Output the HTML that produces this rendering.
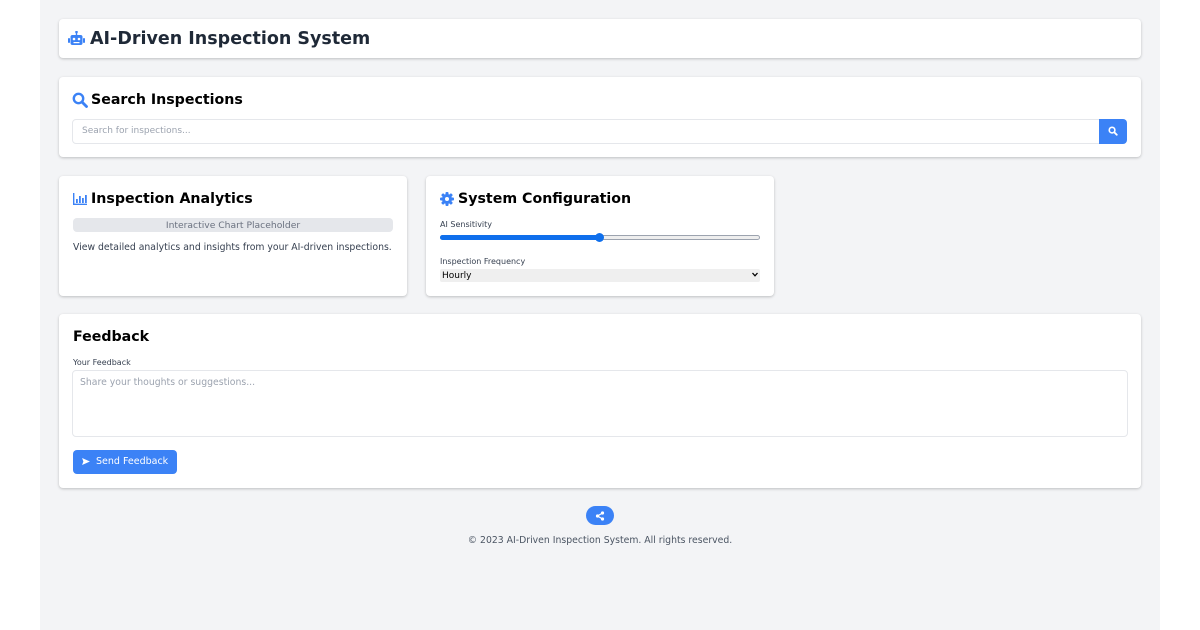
<!DOCTYPE html>
<html><head><meta charset="utf-8"><style>
*{box-sizing:border-box;margin:0;padding:0}
body{width:1200px;height:630px;background:#fff;font-family:"DejaVu Sans","Liberation Sans",sans-serif;position:relative;overflow:hidden}
.wrap{position:absolute;left:40px;top:0;width:1120px;height:630px;background:#f3f4f6}
.card{position:absolute;background:#fff;border-radius:4px;box-shadow:0 1px 3px rgba(0,0,0,.15),0 1px 2px rgba(0,0,0,.08)}
h1{position:absolute;font-size:17.5px;font-weight:bold;color:#1f2937;white-space:nowrap}
h2{position:absolute;font-size:14.2px;font-weight:bold;color:#000;white-space:nowrap}
.ic{position:absolute}
.small{position:absolute;font-size:8px;color:#374151;white-space:nowrap}
</style></head><body>
<div class="wrap"></div>
<div class="card" style="left:59px;top:19px;width:1082px;height:39px"></div>
<svg class="ic" style="left:68px;top:31px" width="17" height="15" viewBox="0 0 17 15"><rect x="2.5" y="4" width="12" height="10" rx="2" fill="#3b82f6"/><rect x="0" y="7" width="2" height="5" rx="1" fill="#3b82f6"/><rect x="15" y="7" width="2" height="5" rx="1" fill="#3b82f6"/><rect x="7.8" y="0" width="1.4" height="4" fill="#3b82f6"/><circle cx="8.5" cy="1" r="1.3" fill="#3b82f6"/><circle cx="6" cy="8" r="1.3" fill="#fff"/><circle cx="11" cy="8" r="1.3" fill="#fff"/><rect x="5.5" y="11" width="6" height="1.2" fill="#fff"/></svg>
<h1 style="left:90px;top:29px">AI-Driven Inspection System</h1>

<div class="card" style="left:59px;top:77px;width:1082px;height:80px"></div>
<svg class="ic" style="left:72px;top:92px" width="16" height="16" viewBox="0 0 16 16"><circle cx="6.5" cy="6.5" r="4.7" fill="none" stroke="#3b82f6" stroke-width="2.4"/><path d="M10 10 L14.5 14.5" stroke="#3b82f6" stroke-width="2.8" stroke-linecap="round"/></svg>
<h2 style="left:91px;top:92px">Search Inspections</h2>
<div style="position:absolute;left:72px;top:119px;width:1030px;height:25px;border:1px solid #e5e7eb;border-radius:4px 0 0 4px;background:#fff"></div>
<div class="small" style="left:82px;top:126px;font-size:9px;color:#9ca3af">Search for inspections...</div>
<div style="position:absolute;left:1099px;top:119px;width:28px;height:25px;background:#3b82f6;border-radius:0 4px 4px 0"></div>
<svg class="ic" style="left:1108px;top:126px" width="10" height="10" viewBox="0 0 16 16"><circle cx="6.5" cy="6.5" r="4.5" fill="none" stroke="#fff" stroke-width="2.6"/><path d="M10 10 L14 14" stroke="#fff" stroke-width="3" stroke-linecap="round"/></svg>

<div class="card" style="left:59px;top:176px;width:348px;height:120px"></div>
<svg class="ic" style="left:73px;top:193px" width="14" height="12" viewBox="0 0 14 12"><path d="M0.7 0V11.3H14" fill="none" stroke="#3b82f6" stroke-width="1.4"/><rect x="3" y="6" width="1.8" height="4" fill="#3b82f6"/><rect x="6" y="3" width="1.8" height="7" fill="#3b82f6"/><rect x="9" y="5" width="1.8" height="5" fill="#3b82f6"/><rect x="12" y="2" width="1.8" height="8" fill="#3b82f6"/></svg>
<h2 style="left:91px;top:191px">Inspection Analytics</h2>
<div style="position:absolute;left:73px;top:218px;width:320px;height:14px;background:#e5e7eb;border-radius:4px"></div>
<div class="small" style="left:73px;top:220px;width:320px;text-align:center;font-size:9.2px;color:#6b7280">Interactive Chart Placeholder</div>
<div class="small" style="left:73px;top:242px;font-size:9.3px">View detailed analytics and insights from your AI-driven inspections.</div>

<div class="card" style="left:426px;top:176px;width:348px;height:120px"></div>
<svg class="ic" style="left:440px;top:192px" width="14" height="14" viewBox="0 0 14 14"><g fill="#3b82f6"><circle cx="7" cy="7" r="5"/><rect x="5.5" y="0" width="3" height="14" rx="1"/><rect x="0" y="5.5" width="14" height="3" rx="1"/><rect x="5.5" y="0" width="3" height="14" rx="1" transform="rotate(45 7 7)"/><rect x="5.5" y="0" width="3" height="14" rx="1" transform="rotate(-45 7 7)"/></g><circle cx="7" cy="7" r="2" fill="#fff"/></svg>
<h2 style="left:458px;top:191px">System Configuration</h2>
<div class="small" style="left:440px;top:220px">AI Sensitivity</div>
<div style="position:absolute;left:440px;top:235px;width:320px;height:5px;border:1px solid #9ca3af;border-radius:3px;background:#eee"></div>
<div style="position:absolute;left:440px;top:235px;width:160px;height:5px;border-radius:3px;background:#0f6fec"></div>
<div style="position:absolute;left:595px;top:233px;width:9px;height:9px;border-radius:50%;background:#0f6fec"></div>
<div class="small" style="left:440px;top:257px">Inspection Frequency</div>
<div style="position:absolute;left:440px;top:269px;width:320px;height:13px;background:#efefef;border-radius:2px"></div>
<div class="small" style="left:442px;top:271px;font-size:9px;color:#000">Hourly</div>
<svg class="ic" style="left:752px;top:272px" width="6" height="5" viewBox="0 0 6 5"><path d="M0.5 1L3 3.8L5.5 1" stroke="#000" stroke-width="1.3" fill="none"/></svg>

<div class="card" style="left:59px;top:314px;width:1082px;height:174px"></div>
<h2 style="left:73px;top:329px">Feedback</h2>
<div class="small" style="left:73px;top:358px">Your Feedback</div>
<div style="position:absolute;left:72px;top:370px;width:1056px;height:67px;border:1px solid #e5e7eb;border-radius:4px"></div>
<div class="small" style="left:80px;top:377px;font-size:9.3px;color:#9ca3af">Share your thoughts or suggestions...</div>
<div style="position:absolute;left:73px;top:450px;width:104px;height:24px;background:#3b82f6;border-radius:4px"></div>
<svg class="ic" style="left:82px;top:458px" width="8" height="7" viewBox="0 0 9 8"><path d="M0 0L9 4L0 8L1.5 4Z" fill="#fff"/></svg>
<div class="small" style="left:96px;top:456px;font-size:9.5px;color:#fff">Send Feedback</div>

<div style="position:absolute;left:586px;top:506px;width:28px;height:19px;background:#3b82f6;border-radius:10px"></div>
<svg class="ic" style="left:595px;top:511px" width="10" height="10" viewBox="0 0 10 10"><path d="M7.5 2L2.5 5L7.5 8" stroke="#fff" stroke-width="1.2" fill="none"/><circle cx="7.5" cy="2" r="1.6" fill="#fff"/><circle cx="2.5" cy="5" r="1.6" fill="#fff"/><circle cx="7.5" cy="8" r="1.6" fill="#fff"/></svg>
<div class="small" style="left:0;width:1200px;text-align:center;top:535px;font-size:9.3px;color:#4b5563">© 2023 AI-Driven Inspection System. All rights reserved.</div>
</body></html>
